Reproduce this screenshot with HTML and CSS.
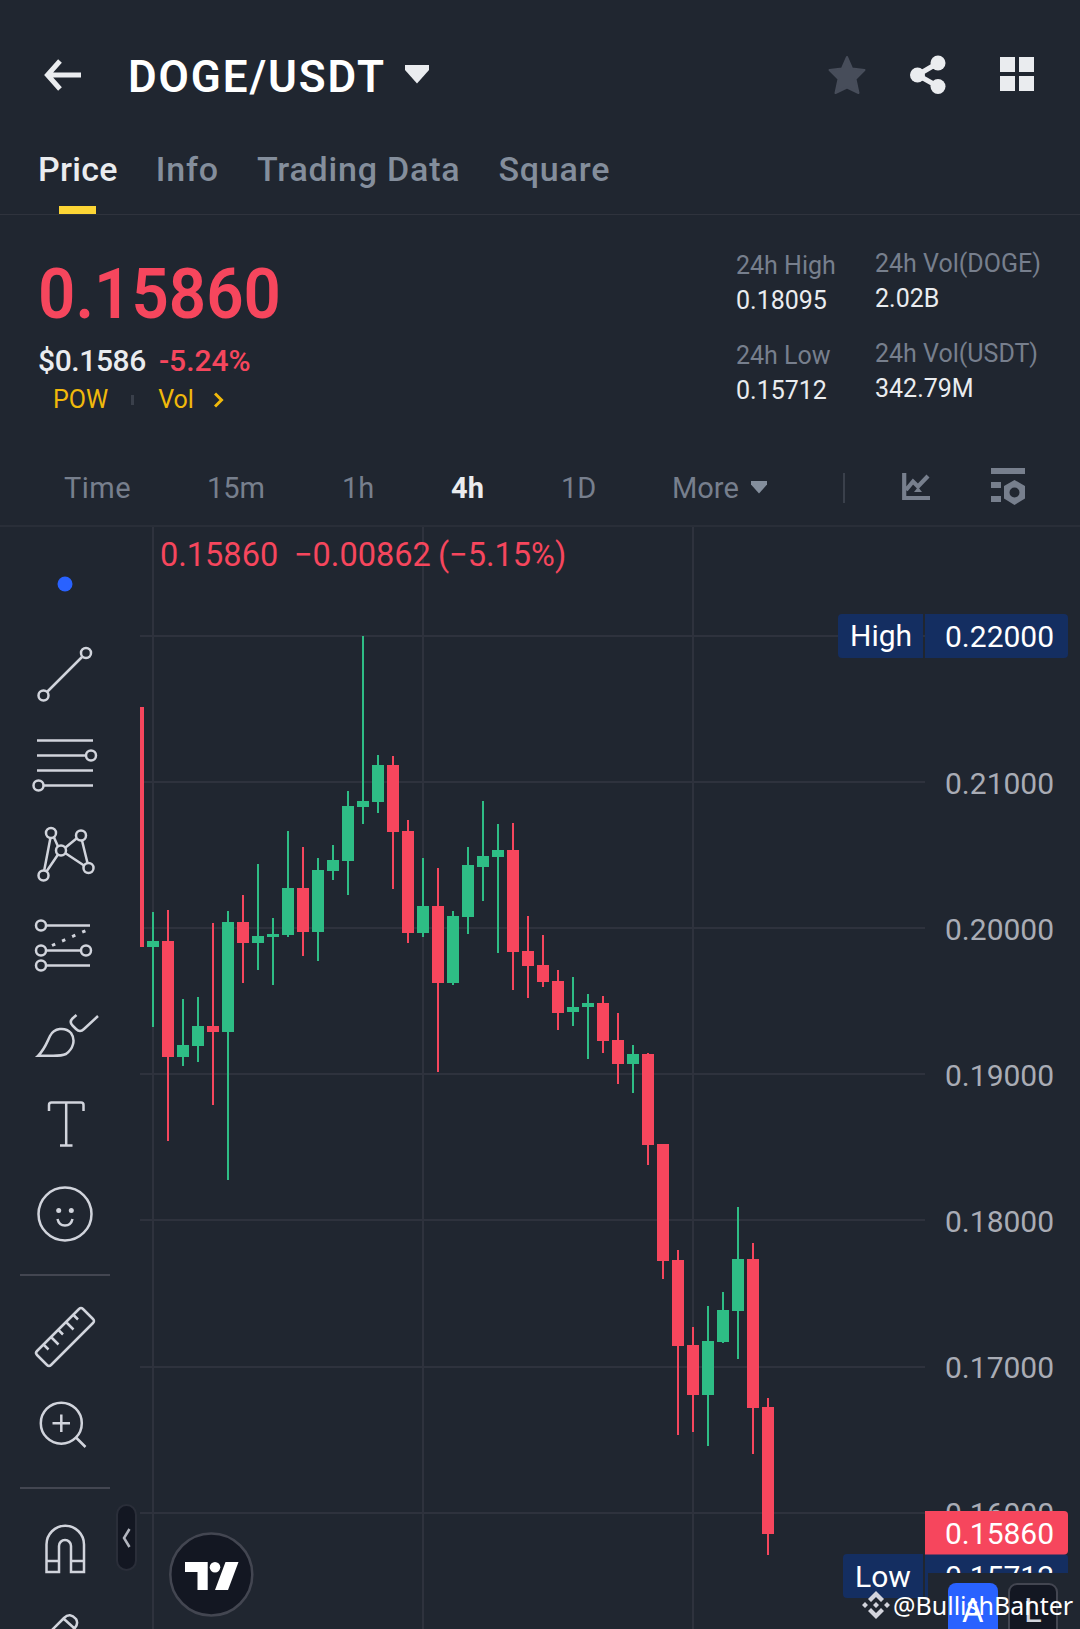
FILE: index.html
```html
<!DOCTYPE html>
<html lang="en">
<head>
  <meta charset="UTF-8">
  <meta name="viewport" content="width=device-width, initial-scale=1.0">
  <title>DOGE/USDT</title>
  <link rel="stylesheet" href="styles.css">
</head>
<body>

  <!-- Header -->
  <header>
    <svg class="back" width="38" height="32" viewBox="0 0 38 32"><path d="M16 2L3.500 16L16 30M4 16H37" fill="none" stroke="#eaecef" stroke-width="5"/></svg>
    <h1>DOGE/USDT</h1>
    <svg class="caret" width="24" height="19" viewBox="0 0 24 19"><path d="M0 0H24V5L12 18.500L0 5Z" fill="#eaecef"/></svg>
    <div class="header-icons">
      <svg width="38" height="40" viewBox="0 0 38 40"><path d="M19 2L24 13.500L36.500 15L27.500 24L30.500 38L19 32.500L7.500 38L10.500 24L1.500 15L14 13.500Z" fill="#474d5a" stroke="#474d5a" stroke-width="2" stroke-linejoin="round"/></svg>
      <svg width="38" height="40" viewBox="0 0 38 40"><path d="M29 8L8.500 20L29 31.500" fill="none" stroke="#eaecef" stroke-width="5"/><circle cx="29" cy="8" r="7.500" fill="#eaecef"/><circle cx="8.500" cy="20" r="7.500" fill="#eaecef"/><circle cx="29" cy="31.500" r="7.500" fill="#eaecef"/></svg>
      <svg width="34" height="36" viewBox="0 0 34 36"><path d="M0 0H15V15H0ZM19 0H34V15H19ZM0 19H15V34H0ZM19 19H34V34H19Z" fill="#eaecef"/></svg>
    </div>
  </header>

  <!-- Tabs -->
  <nav class="tabs">
    <a class="active">Price</a>
    <a>Info</a>
    <a>Trading Data</a>
    <a>Square</a>
  </nav>

  <!-- Ticker -->
  <section class="ticker">
    <div class="ticker-left">
      <div class="last-price">0.15860</div>
      <div class="fiat">$0.1586 <span>-5.24%</span></div>
      <div class="tags">
        <span class="pow">POW</span>
        <i></i>
        <span>Vol</span>
        <svg width="10" height="16" viewBox="0 0 10 16"><path d="M1 1.500L7.500 8L1 14.500" fill="none" stroke="#f0b90b" stroke-width="3"/></svg>
      </div>
    </div>
    <dl class="stats">
      <dt>24h High</dt><dd>0.18095</dd>
      <dt>24h Low</dt><dd>0.15712</dd>
    </dl>
    <dl class="stats stats-vol">
      <dt>24h Vol(DOGE)</dt><dd>2.02B</dd>
      <dt>24h Vol(USDT)</dt><dd>342.79M</dd>
    </dl>
  </section>

  <!-- Intervals -->
  <nav class="intervals">
    <span class="i-time">Time</span>
    <span class="i-15m">15m</span>
    <span class="i-1h">1h</span>
    <span class="i-4h active">4h</span>
    <span class="i-1d">1D</span>
    <span class="i-more">More</span>
    <svg class="more-caret" width="16" height="15" viewBox="0 0 16 15"><path d="M0 0H16V3.500L8 12.500L0 3.500Z" fill="#848e9c"/></svg>
    <i class="divider"></i>
    <svg class="chart-type" width="28" height="31" viewBox="0 0 28 31"><path d="M2.200 0V25H28M4 17L11 8.500L16 13.500L26 3" fill="none" stroke="#777f8d" stroke-width="4.200"/><path d="M16 14L20 19H12Z" fill="#777f8d"/></svg>
    <svg class="settings" width="34" height="40" viewBox="0 0 34 40"><path d="M0 0H34V6H0ZM0 14H10V20H0ZM0 28H10V34H0Z" fill="#777f8d"/><path fill-rule="evenodd" d="M23.500 12L34 18V30.500L23.500 37L13 30.500V18ZM23.500 19.500A5 5 0 1 0 23.500 29.500A5 5 0 1 0 23.500 19.500Z" fill="#777f8d"/></svg>
  </nav>

  <!-- Chart -->
  <main class="chart">
    <aside class="tools">
      <svg viewBox="0 0 130 90"><circle cx="65" cy="45" r="7.500" fill="#2962ff" stroke="none"/></svg>
      <svg viewBox="0 0 130 90"><path d="M47.500 62.500L82 28"/><circle cx="86" cy="24" r="5"/><circle cx="43.500" cy="66.500" r="5"/></svg>
      <svg viewBox="0 0 130 90"><path d="M37 21.500H93M37 36.500H86M37 51.500H93M44 66.500H93"/><circle cx="91" cy="36.500" r="5"/><circle cx="38.500" cy="66.500" r="5"/></svg>
      <svg viewBox="0 0 130 90"><path d="M50.400 29L44.200 61.500M54 28.500L58 37.500M58 45.500L46.500 62.500M65.500 38.500L76.500 29.500M65.500 44.200L84 56.500M82 31.500L87.500 54"/><circle cx="51" cy="24" r="5"/><circle cx="81" cy="26.500" r="5"/><circle cx="61" cy="41.500" r="5"/><circle cx="43.500" cy="66.500" r="5"/><circle cx="88.500" cy="59" r="5"/></svg>
      <svg viewBox="0 0 130 90"><path d="M46 26.500H90M46 51.500H81M46 66.500H90"/><path d="M52 46.500L86 31.500" stroke-width="3" stroke-dasharray="3.500 7.500"/><circle cx="41" cy="26.500" r="5"/><circle cx="41" cy="51.500" r="5"/><circle cx="86" cy="51.500" r="5"/><circle cx="41" cy="66.500" r="5"/></svg>
      <svg viewBox="0 0 130 90"><path d="M38 66.800C45 60 47 53 50 47C54 39 65 37.500 71 44C76 51 73 60 66 65C62 66.800 58 66.800 53 66.800ZM76.500 26L72.500 29.500Q69 33 72.500 36.500L76 40Q80 44 84 40L98 27"/></svg>
      <svg viewBox="0 0 130 90"><path d="M49 32V26Q49 23.500 51.500 23.500H81Q83.500 23.500 83.500 26V32M66.200 23.500V66M60 66.500H72.500"/></svg>
      <svg viewBox="0 0 130 90"><circle cx="65" cy="45" r="26.500"/><circle cx="58.700" cy="41.500" r="2.500" class="solid"/><circle cx="71.300" cy="41.500" r="2.500" class="solid"/><path d="M57.500 50Q59 56.500 65 56.500T72.500 50"/></svg>
      <hr>
      <svg viewBox="0 0 130 90"><path d="M37 59L79 17Q81 15 83 17L93 27Q95 29 93 31L51 73Q49 75 47 73L37 63Q35 61 37 59ZM44 53L48.500 57.500M51 45L58.500 52.500M58.500 38L63 42.500M66 30L73.500 37.500M73.500 23L78 27.500"/></svg>
      <svg viewBox="0 0 130 90"><circle cx="61.300" cy="41.200" r="20.500"/><path d="M52.500 41.200H70M61.300 32.500V50M76 55.500L85.500 65"/></svg>
      <hr>
      <svg viewBox="0 0 130 90"><path d="M46.500 67V39.500A18.700 18.700 0 0 1 84 39.500V67H71V41A6 6 0 0 0 59 41V67ZM46.500 56H59M71 56H84"/></svg>
      <svg viewBox="0 0 130 90"><path d="M45 42L64 23Q70 17 76 24Q79 29 74 34L60 48M64 24L74 33"/></svg>
    </aside>

    <svg class="plot" width="940" height="1103" viewBox="140 526 940 1103">
      <path class="grid" d="M153 526V1629M423 526V1629M693 526V1629M140 636H925M140 782H925M140 928H925M140 1074H925M140 1220H925M140 1367H925M140 1513H925"/>
      <g id="candles"></g>
      <g class="legend">
        <text x="160" y="566">0.15860</text>
        <text x="294" y="566">−0.00862</text>
        <text x="438" y="566">(−5.15%)</text>
      </g>
      <g class="axis">
        <text x="945" y="794">0.21000</text>
        <text x="945" y="940">0.20000</text>
        <text x="945" y="1086">0.19000</text>
        <text x="945" y="1232">0.18000</text>
        <text x="945" y="1378">0.17000</text>
        <text x="945" y="1524">0.16000</text>
      </g>
      <g class="tag">
        <path d="M923 614H842Q838 614 838 618V654Q838 658 842 658H923ZM925 614H1064Q1068 614 1068 618V654Q1068 658 1064 658H925Z"/>
        <text x="850" y="646">High</text>
        <text x="945" y="647">0.22000</text>
        <path d="M923 1554H847Q843 1554 843 1558V1594Q843 1598 847 1598H923ZM925 1554H1064Q1068 1554 1068 1558V1598H925Z"/>
        <text x="855" y="1587">Low</text>
        <text x="945" y="1587">0.15712</text>
        <path class="last" d="M925 1511H1064Q1068 1511 1068 1515V1550.500Q1068 1554.500 1064 1554.500H925Z"/>
        <text x="945" y="1544">0.15860</text>
      </g>
      <rect x="928" y="1573" width="152" height="56" fill="#202630"/>
      <g class="scale">
        <rect x="948" y="1583" width="50" height="60" rx="8" fill="#2962ff"/>
        <rect x="1009" y="1584" width="48" height="60" rx="8" fill="#131722" stroke="#434651" stroke-width="2"/>
        <text x="962" y="1622" fill="#fff">A</text>
        <text x="1024" y="1622" fill="#d1d4dc">L</text>
      </g>
      <!-- TradingView badge -->
      <g>
        <circle cx="211.300" cy="1574.500" r="41" fill="#131722" stroke="#434651" stroke-width="2.500"/>
        <path d="M185 1562H207.700V1590H197.500V1572H185ZM225.500 1562H238.500L228 1590H215Z" fill="#fff"/>
        <circle cx="215" cy="1567.300" r="5.300" fill="#fff"/>
      </g>
    </svg>

    <div class="collapse"><svg width="9" height="20" viewBox="0 0 9 20"><path d="M7.500 1L2 10L7.500 19" fill="none" stroke="#b2b5be" stroke-width="2.500"/></svg></div>

    <div class="watermark">
      <svg width="28" height="28" viewBox="0 0 28 28"><path d="M14 0L22 8L19 11L14 6L9 11L6 8ZM14 28L22 20L19 17L14 22L9 17L6 20ZM3 11L6 14L3 17L0 14ZM25 11L28 14L25 17L22 14ZM14 11L17 14L14 17L11 14Z" fill="#d3d4dd"/></svg>
      <span>@BullishBanter</span>
    </div>
  </main>

  <script>
    // [color, high, body top, body bottom, low]
    const candles = [
      ["r", 707, 707, 947, 947], ["g", 912, 941, 947, 1027], ["r", 910, 941, 1057, 1141],
      ["g", 999, 1045, 1057, 1066], ["g", 997, 1026, 1046, 1062], ["r", 923, 1026, 1032, 1105],
      ["g", 911, 922, 1032, 1180], ["r", 895, 922, 943, 983], ["g", 864, 936, 943, 970],
      ["g", 918, 934, 937, 985], ["g", 831, 888, 935, 937], ["r", 847, 888, 932, 956],
      ["g", 858, 870, 932, 961], ["g", 845, 860, 871, 880], ["g", 791, 806, 861, 895],
      ["g", 636, 801, 807, 824], ["g", 755, 765, 802, 813], ["r", 756, 765, 832, 889],
      ["r", 820, 831, 933, 943], ["g", 858, 906, 933, 937], ["r", 868, 906, 983, 1072],
      ["g", 911, 916, 983, 985], ["g", 847, 865, 917, 934], ["g", 801, 856, 867, 901],
      ["g", 824, 850, 857, 953], ["r", 823, 850, 952, 990], ["r", 916, 951, 966, 998],
      ["r", 935, 965, 982, 987], ["r", 970, 981, 1013, 1030], ["g", 977, 1007, 1012, 1026],
      ["g", 994, 1003, 1007, 1059], ["r", 996, 1003, 1041, 1053], ["r", 1013, 1040, 1064, 1084],
      ["g", 1045, 1054, 1064, 1093], ["r", 1053, 1054, 1145, 1165], ["r", 1144, 1144, 1261, 1279],
      ["r", 1250, 1260, 1346, 1435], ["r", 1327, 1345, 1395, 1432], ["g", 1306, 1341, 1395, 1446],
      ["g", 1292, 1310, 1342, 1343], ["g", 1207, 1259, 1311, 1359], ["r", 1243, 1259, 1408, 1454],
      ["r", 1398, 1407, 1534, 1555]
    ];

    let out = "";
    candles.forEach(([color, high, top, bottom, low], i) => {
      const x = 138 + i * 15;
      out += `<path class="${color}" d="M${x - 1} ${high}h2V${low}h-2ZM${x - 6} ${top}h12V${bottom}h-12Z"/>`;
    });
    document.getElementById("candles").innerHTML = out;
  </script>

</body>
</html>
```
FILE: styles.css
```css
* {
  box-sizing: border-box;
}

body {
  margin: 0;
  width: 1080px;
  height: 1629px;
  overflow: hidden;
  background-color: #202630;
  color: #eaecef;
  font-family: Roboto, "Liberation Sans", sans-serif;
}

svg {
  display: block;
  flex: none;
}

header {
  display: flex;
  align-items: center;
  height: 149px;
  padding: 0 46px 0 44px;
}

h1 {
  margin: 0 0 0 46px;
  padding-top: 4px;
  width: 277px;
  font-size: 44px;
  font-weight: 600;
  letter-spacing: 1.9px;
  color: #fff;
}

.header-icons {
  display: flex;
  align-items: center;
  margin-left: auto;
}

.header-icons svg:nth-child(2) {
  margin: 0 53px 0 43px;
}

/* Tabs */
.tabs {
  display: flex;
  height: 66px;
  border-bottom: 1px solid #2f333d;
  padding-left: 38px;
  font-size: 34px;
  font-weight: 500;
  line-height: 40px;
  letter-spacing: 0.8px;
  color: #848e9c;
}

.tabs a {
  margin-right: 38px;
}

.tabs .active {
  display: flex;
  flex-direction: column;
  align-items: center;
  justify-content: space-between;
  letter-spacing: 0.3px;
  color: #eaecef;
}

.tabs .active::after {
  content: "";
  width: 37px;
  height: 8px;
  background-color: #fcd535;
}

/* Ticker */
.ticker {
  display: flex;
  height: 230px;
}

.ticker-left {
  width: 736px;
  padding: 38px 0 0 38px;
}

.last-price {
  font-size: 70px;
  font-weight: 600;
  line-height: 82px;
  color: #f6465d;
  transform: scaleX(0.935);
  transform-origin: left;
}

.fiat {
  font-size: 30px;
  font-weight: 500;
  line-height: 40px;
  letter-spacing: -0.4px;
  margin-top: 6px;
}

.fiat span {
  margin-left: 6px;
  letter-spacing: 0;
  color: #f6465d;
}

.tags {
  display: flex;
  align-items: center;
  padding: 1px 0 0 15px;
  font-size: 25px;
  line-height: 36px;
  color: #f0b90b;
}

.tags i {
  width: 3px;
  height: 10px;
  margin: 0 24px 0 23px;
  background-color: #3a404b;
}

.tags svg {
  margin-left: 20px;
}

.stats {
  margin: 33px 0 0;
  width: 139px;
  font-size: 25px;
  line-height: 35px;
}

.stats dt {
  color: #777f8d;
  white-space: nowrap;
}

.stats dd {
  margin: 0 0 20px;
}

.stats-vol {
  margin-top: 31px;
}

/* Intervals */
.intervals {
  display: flex;
  align-items: center;
  height: 80px;
  padding: 6px 0 0 64px;
  font-size: 29px;
  color: #777f8d;
}

.intervals .active {
  color: #eaecef;
  font-weight: 700;
}

.i-time {
  width: 143px;
  letter-spacing: 0.5px;
}

.i-15m {
  width: 135px;
}

.i-1h {
  width: 109px;
}

.i-4h {
  width: 110px;
}

.i-1d {
  width: 111px;
}

.i-more {
  width: 79px;
}

.divider {
  width: 2px;
  height: 30px;
  margin: 0 57px 0 76px;
  background-color: #3a404b;
}

.settings {
  margin-left: 61px;
}

/* Chart */
.chart {
  position: relative;
  display: flex;
  height: 1104px;
  border-top: 2px solid #292e38;
  overflow: hidden;
}

.tools {
  width: 140px;
  padding-top: 12px;
}

.tools svg {
  width: 130px;
  height: 90px;
  fill: none;
  stroke: #d1d4dc;
  stroke-width: 2.5;
}

.tools .solid {
  fill: #d1d4dc;
  stroke: none;
}

.tools hr {
  width: 90px;
  height: 2px;
  border: 0;
  margin: 15px 0 16px 20px;
  background-color: #434651;
}

.plot {
  margin-top: -1px;
}

.grid {
  stroke: #2e323d;
  stroke-width: 2;
  shape-rendering: crispEdges;
}

.r {
  fill: #f6465d;
}

.g {
  fill: #2ebd85;
}

.legend {
  font-size: 32.5px;
  fill: #f6465d;
}

.axis {
  font-size: 30px;
  fill: #a9acb5;
}

.tag {
  font-size: 30px;
  fill: #fff;
}

.tag path {
  fill: #142e61;
}

.tag .last {
  fill: #f6465d;
}

.scale {
  font-size: 33px;
}

.collapse {
  position: absolute;
  left: 116px;
  top: 977px;
  width: 21px;
  height: 67px;
  display: flex;
  align-items: center;
  justify-content: center;
  border: 2px solid #2a2e39;
  border-radius: 11px;
  background-color: #131722;
}

.watermark {
  position: absolute;
  left: 862px;
  top: 1061px;
  display: flex;
  align-items: center;
  gap: 3px;
  font: 400 25px/34px "Noto Sans", sans-serif;
  color: #fff;
}
```
